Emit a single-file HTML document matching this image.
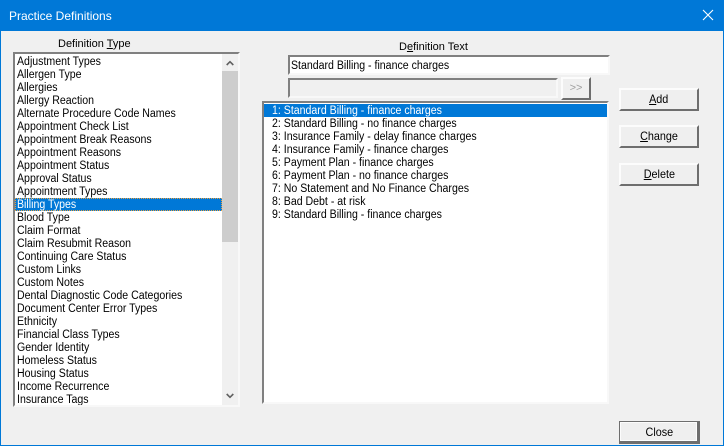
<!DOCTYPE html>
<html><head><meta charset="utf-8">
<style>
html,body{margin:0;padding:0}
body{width:724px;height:446px;position:relative;overflow:hidden;background:#f0f0f0;font-family:"Liberation Sans",sans-serif;font-size:11px;color:#000}
.a{position:absolute;box-sizing:border-box}
.win{left:0;top:0;width:724px;height:446px;border:1px solid #0078d7;border-top:0}
.title{left:0;top:0;width:724px;height:31px;background:#0078d7;color:#fff;font-size:12px;line-height:33px;padding-left:9px}
.sunk{border:2px solid;border-color:#808080 #f8f8f8 #f8f8f8 #808080;background:#fff}
.row{position:absolute;left:0;right:0;height:13px;line-height:15px;white-space:nowrap;font-size:11.5px}
.row span,.t{display:inline-block;transform:scaleX(.92);transform-origin:0 50%}
.btn{border:2px solid;border-color:#fcfcfc #6e6e6e #6e6e6e #fcfcfc;background:#efefef;text-align:center;line-height:19px;font-size:12px}
.btn span{display:inline-block;transform:scaleX(.9);transform-origin:50% 50%}
u{text-decoration:underline}
.lbl{white-space:nowrap;line-height:15px;font-size:11px}
.sel{background:#0078d7;color:#fff}
</style></head>
<body>
<div class="a win"></div>
<div class="a title">Practice Definitions</div>
<svg class="a" style="left:702px;top:9px" width="12" height="12" viewBox="0 0 12 12"><path d="M1 1L11 11M11 1L1 11" stroke="#fff" stroke-width="1.1" fill="none"/></svg>

<div class="a lbl" style="left:58px;top:37px">Definition <u>T</u>ype</div>
<div class="a sunk" style="left:13px;top:52px;width:227px;height:355px;overflow:hidden">
 <div class="a" style="left:0;top:0;width:207px;height:351px">
  <div class="row" style="top:1px;left:2px"><span>Adjustment Types</span></div>
  <div class="row" style="top:14px;left:2px"><span>Allergen Type</span></div>
  <div class="row" style="top:27px;left:2px"><span>Allergies</span></div>
  <div class="row" style="top:40px;left:2px"><span>Allergy Reaction</span></div>
  <div class="row" style="top:53px;left:2px"><span>Alternate Procedure Code Names</span></div>
  <div class="row" style="top:66px;left:2px"><span>Appointment Check List</span></div>
  <div class="row" style="top:79px;left:2px"><span>Appointment Break Reasons</span></div>
  <div class="row" style="top:92px;left:2px"><span>Appointment Reasons</span></div>
  <div class="row" style="top:105px;left:2px"><span>Appointment Status</span></div>
  <div class="row" style="top:118px;left:2px"><span>Approval Status</span></div>
  <div class="row" style="top:131px;left:2px"><span>Appointment Types</span></div>
  <div class="row sel" style="top:144px;left:0;padding-left:2px;outline:1px dotted #e8a040;outline-offset:-1px"><span>Billing Types</span></div>
  <div class="row" style="top:157px;left:2px"><span>Blood Type</span></div>
  <div class="row" style="top:170px;left:2px"><span>Claim Format</span></div>
  <div class="row" style="top:183px;left:2px"><span>Claim Resubmit Reason</span></div>
  <div class="row" style="top:196px;left:2px"><span>Continuing Care Status</span></div>
  <div class="row" style="top:209px;left:2px"><span>Custom Links</span></div>
  <div class="row" style="top:222px;left:2px"><span>Custom Notes</span></div>
  <div class="row" style="top:235px;left:2px"><span>Dental Diagnostic Code Categories</span></div>
  <div class="row" style="top:248px;left:2px"><span>Document Center Error Types</span></div>
  <div class="row" style="top:261px;left:2px"><span>Ethnicity</span></div>
  <div class="row" style="top:274px;left:2px"><span>Financial Class Types</span></div>
  <div class="row" style="top:287px;left:2px"><span>Gender Identity</span></div>
  <div class="row" style="top:300px;left:2px"><span>Homeless Status</span></div>
  <div class="row" style="top:313px;left:2px"><span>Housing Status</span></div>
  <div class="row" style="top:326px;left:2px"><span>Income Recurrence</span></div>
  <div class="row" style="top:339px;left:2px"><span>Insurance Tags</span></div>
 </div>
 <div class="a" style="left:207px;top:0;width:16px;height:351px;background:#f0f0f0"></div>
 <div class="a" style="left:207px;top:17px;width:16px;height:171px;background:#cdcdcd"></div>
 <svg class="a" style="left:211px;top:6px" width="8" height="6" viewBox="0 0 8 6"><path d="M0.7 5L4 1.7L7.3 5" stroke="#606060" stroke-width="1.6" fill="none"/></svg>
 <svg class="a" style="left:211px;top:339px" width="8" height="6" viewBox="0 0 8 6"><path d="M0.7 1L4 4.3L7.3 1" stroke="#606060" stroke-width="1.6" fill="none"/></svg>
</div>

<div class="a lbl" style="left:399px;top:40px">D<u>e</u>finition Text</div>
<div class="a sunk" style="left:288px;top:55px;width:322px;height:20px;font-size:11.5px;line-height:18px;padding-left:1px;white-space:nowrap"><span class="t">Standard Billing - finance charges</span></div>
<div class="a sunk" style="left:288px;top:78px;width:270px;height:20px;background:#f0f0f0"></div>
<div class="a btn" style="left:561px;top:77px;width:30px;height:23px;color:#a0a0a0;font-size:11px;line-height:18px">&gt;&gt;</div>

<div class="a sunk" style="left:262px;top:101px;width:347px;height:303px;overflow:hidden">
 <div class="row sel" style="top:1px;padding-left:8px"><span>1: Standard Billing - finance charges</span></div>
 <div class="row" style="top:14px;padding-left:8px"><span>2: Standard Billing - no finance charges</span></div>
 <div class="row" style="top:27px;padding-left:8px"><span>3: Insurance Family - delay finance charges</span></div>
 <div class="row" style="top:40px;padding-left:8px"><span>4: Insurance Family - finance charges</span></div>
 <div class="row" style="top:53px;padding-left:8px"><span>5: Payment Plan - finance charges</span></div>
 <div class="row" style="top:66px;padding-left:8px"><span>6: Payment Plan - no finance charges</span></div>
 <div class="row" style="top:79px;padding-left:8px"><span>7: No Statement and No Finance Charges</span></div>
 <div class="row" style="top:92px;padding-left:8px"><span>8: Bad Debt - at risk</span></div>
 <div class="row" style="top:105px;padding-left:8px"><span>9: Standard Billing - finance charges</span></div>
</div>

<div class="a btn" style="left:619px;top:88px;width:80px;height:23px"><span><u>A</u>dd</span></div>
<div class="a btn" style="left:619px;top:125px;width:80px;height:23px"><span><u>C</u>hange</span></div>
<div class="a btn" style="left:619px;top:163px;width:80px;height:23px"><span><u>D</u>elete</span></div>
<div class="a btn" style="left:619px;top:421px;width:81px;height:23px;border-width:1px 3px 3px 1px;border-color:#6e6e6e;box-shadow:inset 0 0 0 1px #fcfcfc;line-height:20px;padding-left:2px"><span>Close</span></div>
</body></html>
